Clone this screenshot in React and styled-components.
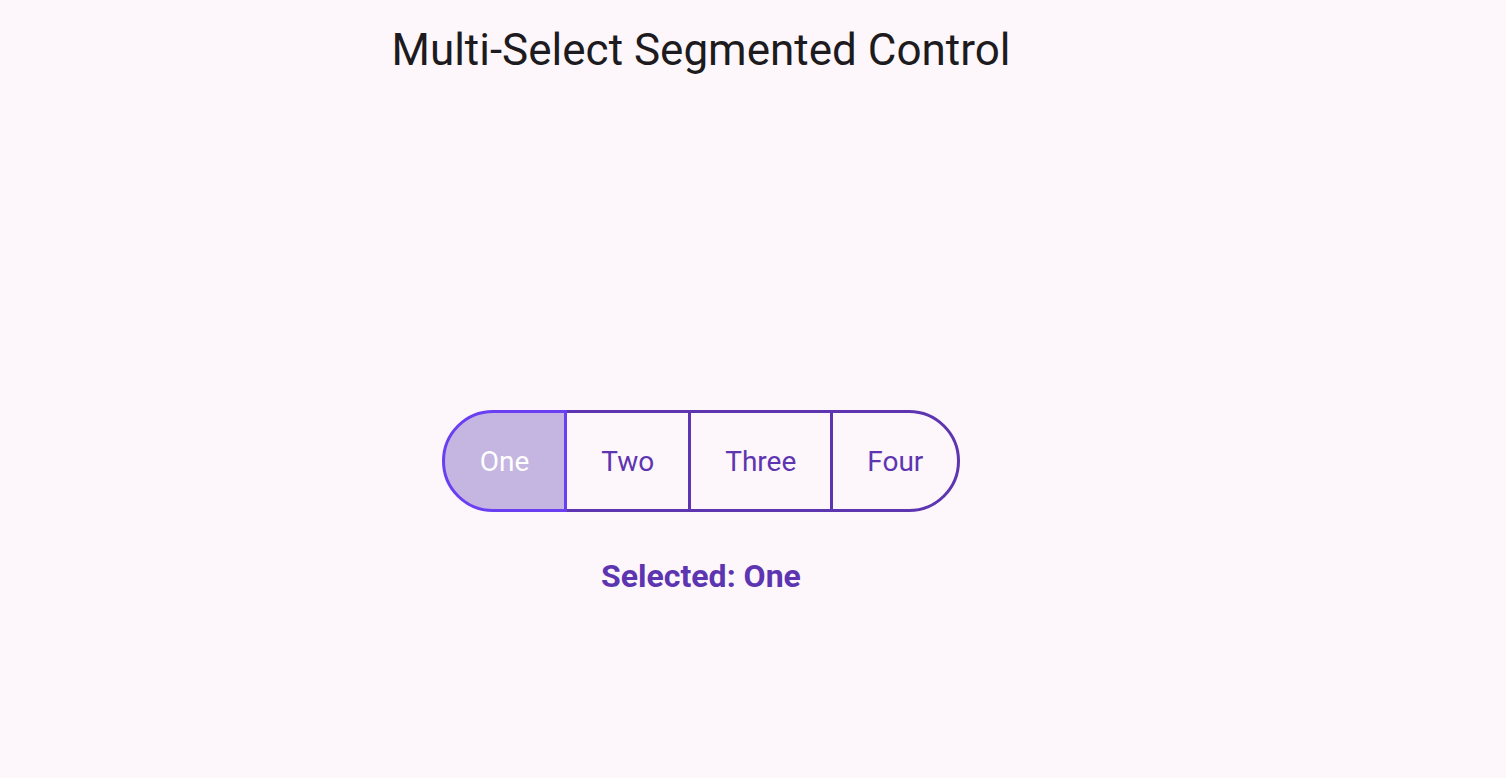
import React, { useState } from "react";
import styled, { createGlobalStyle } from "styled-components";

const options = ["One", "Two", "Three", "Four"];

export default function App() {
  const [selected, setSelected] = useState(["One"]);

  const toggle = (opt) => {
    setSelected((prev) =>
      prev.includes(opt) ? prev.filter((o) => o !== opt) : [...prev, opt]
    );
  };

  const label = options.filter((o) => selected.includes(o)).join(", ");

  return (
    <>
      <GlobalStyle />
      <Page>
        <Title>Multi-Select Segmented Control</Title>
        <Body>
          <Segmented>
            {options.map((opt, i) => (
              <Segment
                key={opt}
                $active={selected.includes(opt)}
                $first={i === 0}
                $last={i === options.length - 1}
                onClick={() => toggle(opt)}
              >
                {opt}
              </Segment>
            ))}
          </Segmented>
          <SelectedText>Selected: {label || "None"}</SelectedText>
        </Body>
      </Page>
    </>
  );
}

const GlobalStyle = createGlobalStyle`
  html, body {
    margin: 0;
    padding: 0;
    background: #fdf7fb;
    font-family: Roboto, "Liberation Sans", sans-serif;
  }
`;

const Page = styled.div`
  width: 1402px;
  height: 778px;
  display: flex;
  flex-direction: column;
  align-items: center;
`;

const Title = styled.h1`
  margin: 24px 0 0;
  font-size: 44px;
  font-weight: 400;
  line-height: 52px;
  color: #1d1b20;
`;

const Body = styled.div`
  display: flex;
  flex-direction: column;
  align-items: center;
  margin-top: 334px;
`;

const Segmented = styled.div`
  display: flex;
  height: 102px;
`;

const Segment = styled.button`
  position: relative;
  z-index: ${(p) => (p.$active ? 1 : 0)};
  height: 102px;
  margin-left: ${(p) => (p.$first ? "0" : "-3px")};
  padding: 0 ${(p) => (p.$first ? "35px" : "34px")};
  border: 3px solid ${(p) => (p.$active ? "#6a3ff2" : "#5e35b1")};
  border-radius: ${(p) =>
    p.$first ? "51px 0 0 51px" : p.$last ? "0 51px 51px 0" : "0"};
  background: ${(p) => (p.$active ? "#c5b5e1" : "#fdf7fb")};
  color: ${(p) => (p.$active ? "#ffffff" : "#5e35b1")};
  font-family: Roboto, "Liberation Sans", sans-serif;
  font-size: 28px;
  font-weight: 400;
  cursor: pointer;
`;

const SelectedText = styled.div`
  margin-top: 45px;
  font-size: 32px;
  font-weight: 700;
  color: #5e35b1;
`;
